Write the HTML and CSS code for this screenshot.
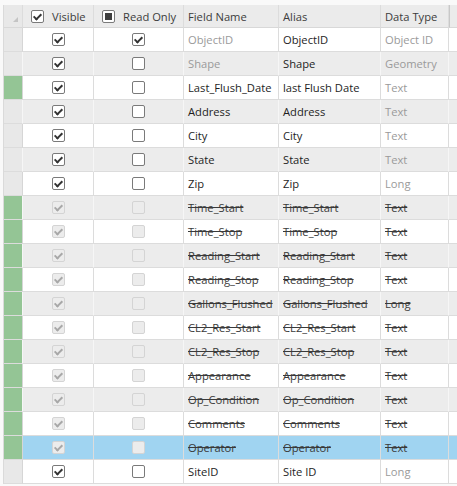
FILE: index.html
```html
<!DOCTYPE html>
<html>
<head>
<meta charset="utf-8">
<link rel="stylesheet" href="styles.css">
</head>
<body>
<div class="page">
  <div class="grid">
    <div class="row head">
      <div class="c g"><span class="corner"></span></div>
      <div class="c vis hl"><span class="cb on"></span><span class="ht">Visible</span></div>
      <div class="c ro hl"><span class="cb ind"></span><span class="ht">Read Only</span></div>
      <div class="c fn"><span class="ht">Field Name</span></div>
      <div class="c al"><span class="ht">Alias</span></div>
      <div class="c dt"><span class="ht">Data Type</span></div>
      <div class="c ex"></div>
    </div>

    <div class="row">
      <div class="c g"></div>
      <div class="c vis"><span class="cb on"></span></div>
      <div class="c ro"><span class="cb on"></span></div>
      <div class="c fn dim">ObjectID</div>
      <div class="c al">ObjectID</div>
      <div class="c dt dim">Object ID</div>
      <div class="c ex"></div>
    </div>
    <div class="row alt">
      <div class="c g"></div>
      <div class="c vis"><span class="cb on"></span></div>
      <div class="c ro"><span class="cb"></span></div>
      <div class="c fn dim">Shape</div>
      <div class="c al">Shape</div>
      <div class="c dt dim">Geometry</div>
      <div class="c ex"></div>
    </div>
    <div class="row">
      <div class="c g mod"></div>
      <div class="c vis"><span class="cb on"></span></div>
      <div class="c ro"><span class="cb"></span></div>
      <div class="c fn">Last_Flush_Date</div>
      <div class="c al">last Flush Date</div>
      <div class="c dt dim">Text</div>
      <div class="c ex"></div>
    </div>
    <div class="row alt">
      <div class="c g"></div>
      <div class="c vis"><span class="cb on"></span></div>
      <div class="c ro"><span class="cb"></span></div>
      <div class="c fn">Address</div>
      <div class="c al">Address</div>
      <div class="c dt dim">Text</div>
      <div class="c ex"></div>
    </div>
    <div class="row">
      <div class="c g"></div>
      <div class="c vis"><span class="cb on"></span></div>
      <div class="c ro"><span class="cb"></span></div>
      <div class="c fn">City</div>
      <div class="c al">City</div>
      <div class="c dt dim">Text</div>
      <div class="c ex"></div>
    </div>
    <div class="row alt">
      <div class="c g"></div>
      <div class="c vis"><span class="cb on"></span></div>
      <div class="c ro"><span class="cb"></span></div>
      <div class="c fn">State</div>
      <div class="c al">State</div>
      <div class="c dt dim">Text</div>
      <div class="c ex"></div>
    </div>
    <div class="row">
      <div class="c g"></div>
      <div class="c vis"><span class="cb on"></span></div>
      <div class="c ro"><span class="cb"></span></div>
      <div class="c fn">Zip</div>
      <div class="c al">Zip</div>
      <div class="c dt dim">Long</div>
      <div class="c ex"></div>
    </div>

    <div class="row alt del">
      <div class="c g mod"></div>
      <div class="c vis"><span class="cb on dis"></span></div>
      <div class="c ro"><span class="cb dis"></span></div>
      <div class="c fn">Time_Start</div>
      <div class="c al">Time_Start</div>
      <div class="c dt">Text</div>
      <div class="c ex"></div>
    </div>
    <div class="row del">
      <div class="c g mod"></div>
      <div class="c vis"><span class="cb on dis"></span></div>
      <div class="c ro"><span class="cb dis"></span></div>
      <div class="c fn">Time_Stop</div>
      <div class="c al">Time_Stop</div>
      <div class="c dt">Text</div>
      <div class="c ex"></div>
    </div>
    <div class="row alt del">
      <div class="c g mod"></div>
      <div class="c vis"><span class="cb on dis"></span></div>
      <div class="c ro"><span class="cb dis"></span></div>
      <div class="c fn">Reading_Start</div>
      <div class="c al">Reading_Start</div>
      <div class="c dt">Text</div>
      <div class="c ex"></div>
    </div>
    <div class="row del">
      <div class="c g mod"></div>
      <div class="c vis"><span class="cb on dis"></span></div>
      <div class="c ro"><span class="cb dis"></span></div>
      <div class="c fn">Reading_Stop</div>
      <div class="c al">Reading_Stop</div>
      <div class="c dt">Text</div>
      <div class="c ex"></div>
    </div>
    <div class="row alt del">
      <div class="c g mod"></div>
      <div class="c vis"><span class="cb on dis"></span></div>
      <div class="c ro"><span class="cb dis"></span></div>
      <div class="c fn">Gallons_Flushed</div>
      <div class="c al">Gallons_Flushed</div>
      <div class="c dt">Long</div>
      <div class="c ex"></div>
    </div>
    <div class="row del">
      <div class="c g mod"></div>
      <div class="c vis"><span class="cb on dis"></span></div>
      <div class="c ro"><span class="cb dis"></span></div>
      <div class="c fn">CL2_Res_Start</div>
      <div class="c al">CL2_Res_Start</div>
      <div class="c dt">Text</div>
      <div class="c ex"></div>
    </div>
    <div class="row alt del">
      <div class="c g mod"></div>
      <div class="c vis"><span class="cb on dis"></span></div>
      <div class="c ro"><span class="cb dis"></span></div>
      <div class="c fn">CL2_Res_Stop</div>
      <div class="c al">CL2_Res_Stop</div>
      <div class="c dt">Text</div>
      <div class="c ex"></div>
    </div>
    <div class="row del">
      <div class="c g mod"></div>
      <div class="c vis"><span class="cb on dis"></span></div>
      <div class="c ro"><span class="cb dis"></span></div>
      <div class="c fn">Appearance</div>
      <div class="c al">Appearance</div>
      <div class="c dt">Text</div>
      <div class="c ex"></div>
    </div>
    <div class="row alt del">
      <div class="c g mod"></div>
      <div class="c vis"><span class="cb on dis"></span></div>
      <div class="c ro"><span class="cb dis"></span></div>
      <div class="c fn">Op_Condition</div>
      <div class="c al">Op_Condition</div>
      <div class="c dt">Text</div>
      <div class="c ex"></div>
    </div>
    <div class="row del">
      <div class="c g mod"></div>
      <div class="c vis"><span class="cb on dis"></span></div>
      <div class="c ro"><span class="cb dis"></span></div>
      <div class="c fn">Comments</div>
      <div class="c al">Comments</div>
      <div class="c dt">Text</div>
      <div class="c ex"></div>
    </div>
    <div class="row sel del">
      <div class="c g mod"></div>
      <div class="c vis"><span class="cb on dis"></span></div>
      <div class="c ro"><span class="cb dis"></span></div>
      <div class="c fn">Operator</div>
      <div class="c al">Operator</div>
      <div class="c dt">Text</div>
      <div class="c ex"></div>
    </div>
    <div class="row">
      <div class="c g"></div>
      <div class="c vis"><span class="cb on"></span></div>
      <div class="c ro"><span class="cb"></span></div>
      <div class="c fn">SiteID</div>
      <div class="c al">Site ID</div>
      <div class="c dt dim">Long</div>
      <div class="c ex"></div>
    </div>
  </div>
</div>
</body>
</html>
```

FILE: styles.css
```css
html, body {
  margin: 0;
  padding: 0;
  background: #ffffff;
}
.page {
  width: 457px;
  height: 486px;
  overflow: hidden;
  padding-top: 5px;
  padding-left: 3px;
  box-sizing: border-box;
  background: #f9f9f9;
  font-family: "Open Sans", "Noto Sans", sans-serif;
  font-size: 11.2px;
  color: #1e1e1e;
}
.grid {
  display: flex;
  flex-direction: column;
  border-left: 1px solid #dadada;
}
.row {
  display: grid;
  grid-template-columns: 19px 71px 90px 95px 102px 68px 30px;
  height: 24px;
  background: #ffffff;
}
.row.alt { background: #ececec; }
.row.head {
  height: 23px;
  background: #ebebeb;
}
.row.sel { background: #a0d4f1; }
.c {
  border-right: 1px solid #dcdcdc;
  border-bottom: 1px solid #dcdcdc;
  display: flex;
  align-items: center;
  white-space: nowrap;
  overflow: hidden;
  padding-left: 4px;
  box-sizing: border-box;
}
.row.alt .c { border-color: #f6f6f6; border-bottom-color: #dcdcdc; }
.c.g {
  background: #e8e8e8;
  padding: 0;
  position: relative;
  border-right-color: #d6d6d6;
}
.c.g.mod { background: #94c595; }
.c.vis, .c.ro { justify-content: center; padding: 0; }
.head .c.hl { justify-content: flex-start; padding-left: 8px; }
.head .c { border-bottom-color: #d8d8d8; border-right-color: #dcdcdc; }
.ht { color: #3c3c3c; }
.head .cb + .ht { margin-left: 8px; }
.c.ex { border-right: none; }
.head .c.ex { border-left: 1px solid #c8c8c8; }
.dim { color: #9a9a9a; }
.del .fn, .del .al, .del .dt {
  text-decoration: line-through;
  color: #3a3a3a;
}
.corner {
  position: absolute;
  right: 4px;
  bottom: 5px;
  width: 0;
  height: 0;
  border-left: 5px solid transparent;
  border-bottom: 5px solid #c4c4c4;
}
.cb {
  width: 13px;
  height: 13px;
  box-sizing: border-box;
  border: 1px solid #7a7a7a;
  border-radius: 2px;
  background: #ffffff;
  position: relative;
  flex: none;
}
.cb.on::after {
  content: "";
  position: absolute;
  left: 3px;
  top: 1px;
  width: 3px;
  height: 6px;
  border-right: 2px solid #333333;
  border-bottom: 2px solid #333333;
  transform: rotate(45deg);
}
.cb.ind::after {
  content: "";
  position: absolute;
  left: 2px;
  top: 2px;
  width: 7px;
  height: 7px;
  background: #3f3f3f;
}
.cb.dis {
  background: #ececec;
  border-color: #d4d4d4;
}
.cb.dis.on::after {
  border-color: #a8a8a8;
}
```
